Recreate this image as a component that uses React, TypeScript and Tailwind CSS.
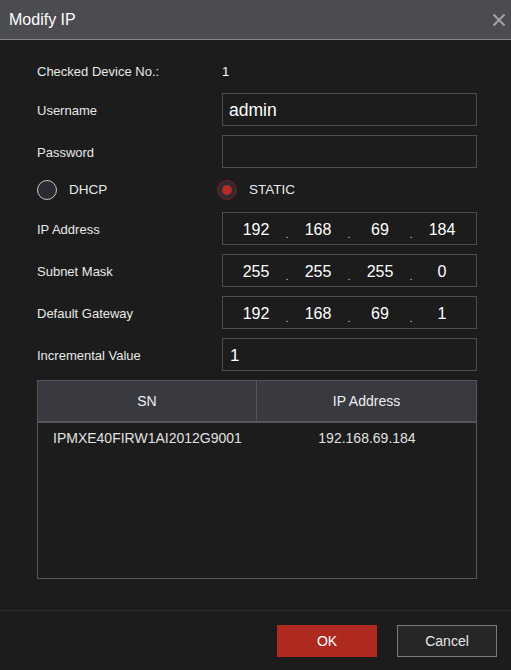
import React from "react";

const font = { fontFamily: '"Liberation Sans", Arial, sans-serif' };

function Label({ children }: { children: React.ReactNode }) {
  return <div className="w-[185px] shrink-0 pt-[3px] text-[13px] text-[#e8e8e8]">{children}</div>;
}

function IpBox({ parts }: { parts: string[] }) {
  return (
    <div className="flex h-[33px] w-[255px] shrink-0 items-center border border-[#4b4c55] pl-[8px]">
      {parts.map((p, i) => (
        <React.Fragment key={i}>
          <div className="w-[50px] pt-[2px] text-center text-[16px] text-white">{p}</div>
          {i < 3 && <div className="w-[12px] pt-[11px] text-center text-[11px] leading-none text-[#cfcfcf]">.</div>}
        </React.Fragment>
      ))}
    </div>
  );
}

function Row({ label, children }: { label: string; children: React.ReactNode }) {
  return (
    <div className="flex h-[33px] items-center">
      <Label>{label}</Label>
      {children}
    </div>
  );
}

export default function App() {
  return (
    <div className="flex h-[670px] w-[511px] flex-col bg-[#1c1c1c]" style={font}>
      <div className="flex h-[40px] shrink-0 items-center justify-between border-b border-[#85868b] bg-[#4b4c52] pl-[9px] pr-[5px]">
        <span className="text-[16px] text-white">Modify IP</span>
        <svg width="14" height="14" viewBox="0 0 14 14" className="mt-[1px]">
          <path d="M1.5 1.5 L12.5 12.5 M12.5 1.5 L1.5 12.5" stroke="#a3a3a6" strokeWidth="2" />
        </svg>
      </div>

      <div className="flex flex-1 flex-col pl-[37px] pr-[34px] pt-[22px]">
        <div className="flex h-[20px] items-center">
          <div className="w-[185px] shrink-0 text-[13px] text-[#e8e8e8]">Checked Device No.:</div>
          <div className="text-[13px] text-white">1</div>
        </div>

        <div className="mt-[11px] flex flex-col gap-[9px]">
          <Row label="Username">
            <div className="flex h-[33px] w-[255px] shrink-0 items-center border border-[#4b4c55] px-[6px] pt-[1px] text-[17.5px] text-white">
              admin
            </div>
          </Row>
          <Row label="Password">
            <div className="h-[33px] w-[255px] shrink-0 border border-[#4b4c55]" />
          </Row>
        </div>

        <div className="my-[9px] flex h-[26px] items-center">
          <div className="flex w-[180px] shrink-0 items-center">
            <div className="h-[20px] w-[20px] rounded-full border-[1.5px] border-[#c4c4c6] bg-[#2a2c31]" />
            <span className="ml-[12px] text-[13.5px] text-[#e8e8e8]">DHCP</span>
          </div>
          <div className="flex items-center">
            <div className="flex h-[20px] w-[20px] items-center justify-center rounded-full border-[1.5px] border-[#7d1f1a] bg-[#2a2c31]">
              <div className="h-[10px] w-[10px] rounded-full bg-[#b52a22]" />
            </div>
            <span className="ml-[12px] text-[13.5px] text-[#e8e8e8]">STATIC</span>
          </div>
        </div>

        <div className="flex flex-col gap-[9px]">
          <Row label="IP Address">
            <IpBox parts={["192", "168", "69", "184"]} />
          </Row>
          <Row label="Subnet Mask">
            <IpBox parts={["255", "255", "255", "0"]} />
          </Row>
          <Row label="Default Gateway">
            <IpBox parts={["192", "168", "69", "1"]} />
          </Row>
          <Row label="Incremental Value">
            <div className="flex h-[33px] w-[255px] shrink-0 items-center border border-[#4b4c55] px-[7px] pt-[2px] text-[17px] text-white">
              1
            </div>
          </Row>
        </div>

        <div className="mt-[9px] flex h-[199px] w-[440px] flex-col border border-[#55565c]">
          <div className="flex h-[42px] shrink-0 border-b-2 border-[#55565c] bg-[#393a40] text-[14px] text-[#eeeeee]">
            <div className="flex w-[219px] items-center justify-center border-r border-[#55565c]">SN</div>
            <div className="flex flex-1 items-center justify-center">IP Address</div>
          </div>
          <div className="flex h-[31px] text-[14px] text-[#e0e0e0]">
            <div className="flex w-[220px] items-center pl-[15px]">IPMXE40FIRW1AI2012G9001</div>
            <div className="flex flex-1 items-center justify-center">192.168.69.184</div>
          </div>
        </div>
      </div>

      <div className="flex h-[60px] shrink-0 items-start justify-end gap-[20px] border-t border-[#2c2c2c] pr-[14px] pt-[14px]">
        <button className="h-[32px] w-[100px] bg-[#ae2a20] text-[14px] text-white">OK</button>
        <button className="h-[32px] w-[100px] border border-[#7b7b7b] bg-[#262626] text-[14px] text-[#e8e8e8]">
          Cancel
        </button>
      </div>
    </div>
  );
}
